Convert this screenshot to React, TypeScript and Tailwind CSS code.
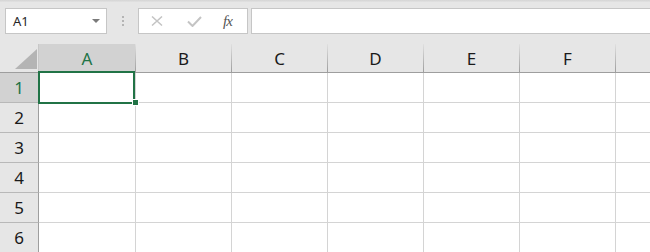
import React from "react";

const COLS = ["A", "B", "C", "D", "E", "F", ""];
const ROWS = [1, 2, 3, 4, 5, 6];

export default function App() {
  return (
    <div
      className="w-[650px] h-[252px] overflow-hidden bg-white relative"
      style={{ fontFamily: '"Noto Sans", "Open Sans", sans-serif' }}
    >
      {/* Formula bar */}
      <div className="h-[44px] bg-[#e6e6e6] relative">
        <div className="absolute left-0 right-0 top-0 h-[2px] bg-gradient-to-b from-[#d4d4d4] to-[#e2e2e2]" />
        <div className="flex items-start pt-[8px] pl-[5px]">
          {/* Name box */}
          <div className="w-[102px] h-[26px] bg-white border border-[#c6c6c6] flex items-center justify-between pl-[7px] pr-[6px]">
            <span className="text-[13px] text-[#262626] leading-none">A1</span>
            <svg width="8" height="5" viewBox="0 0 8 5">
              <polygon points="0,0 8,0 4,4" fill="#7a7a7a" />
            </svg>
          </div>
          {/* Dots */}
          <div className="w-[31px] h-[26px] flex flex-col items-center justify-center gap-[2px]">
            <div className="w-[2px] h-[2px] bg-[#b4b4b4]" />
            <div className="w-[2px] h-[2px] bg-[#b4b4b4]" />
            <div className="w-[2px] h-[2px] bg-[#b4b4b4]" />
          </div>
          {/* fx box */}
          <div className="w-[110px] h-[26px] bg-white border border-[#c6c6c6] flex items-center">
            <div className="w-[12px]" />
            <svg width="12" height="10" viewBox="0 0 12 10">
              <path d="M1 0.5 L11 9.5 M11 0.5 L1 9.5" stroke="#c4c4c4" strokeWidth="1.5" fill="none" />
            </svg>
            <div className="w-[24px]" />
            <svg width="15" height="11" viewBox="0 0 15 11">
              <path d="M1 5.5 L5.5 10 L14 1" stroke="#c4c4c4" strokeWidth="2" fill="none" />
            </svg>
            <div className="w-[21px]" />
            <span
              className="text-[15px] italic text-[#555] leading-none tracking-[-1px]"
              style={{ fontFamily: '"Liberation Serif", serif' }}
            >
              fx
            </span>
          </div>
          <div className="w-[3px]" />
          {/* formula input */}
          <div className="flex-1 h-[26px] bg-white border border-[#c6c6c6] border-r-0" />
        </div>
      </div>

      {/* Grid */}
      <div className="relative">
        {/* header row */}
        <div className="flex h-[29px] bg-[#e6e6e6] border-b border-[#9e9e9e]">
          <div className="w-[39px] shrink-0 relative border-r border-[#c8c8c8]">
            <svg className="absolute left-[15px] top-[5px]" width="22" height="20" viewBox="0 0 22 20">
              <polygon points="22,0 22,20 0,20" fill="#b4b4b4" />
            </svg>
          </div>
          {COLS.map((c, i) => (
            <div key={i} className={(i === 0 ? "w-[97px]" : "w-[96px]") + " shrink-0 flex h-full"}>
              <div
                className={
                  "flex-1 flex items-center justify-center text-[17px] leading-none " +
                  (c === "A" ? "bg-[#d2d2d2] text-[#217346]" : "text-[#1a1a1a]")
                }
              >
                {c}
              </div>
              <div className="w-px h-full bg-gradient-to-b from-[#e0e0e0] to-[#9e9e9e]" />
            </div>
          ))}
        </div>

        {/* rows */}
        {ROWS.map((r) => (
          <div key={r} className="flex h-[30px]">
            <div
              className={
                "w-[39px] shrink-0 flex items-center justify-center text-[17px] leading-none border-r border-b border-r-[#9e9e9e] border-b-[#b8b8b8] " +
                (r === 1 ? "bg-[#d2d2d2] text-[#217346]" : "bg-[#e6e6e6] text-[#1a1a1a]")
              }
            >
              {r}
            </div>
            {COLS.map((c, i) => (
              <div
                key={i}
                className={(i === 0 ? "w-[97px]" : "w-[96px]") + " shrink-0 border-r border-b border-[#d4d4d4]"}
              />
            ))}
          </div>
        ))}

        {/* selection */}
        <div className="absolute left-[38px] top-[27px] w-[97px] h-[33px] border-2 border-[#217346]" />
        <div className="absolute left-[132px] top-[55px] w-[7px] h-[7px] bg-[#217346] border border-white" />
      </div>
    </div>
  );
}
